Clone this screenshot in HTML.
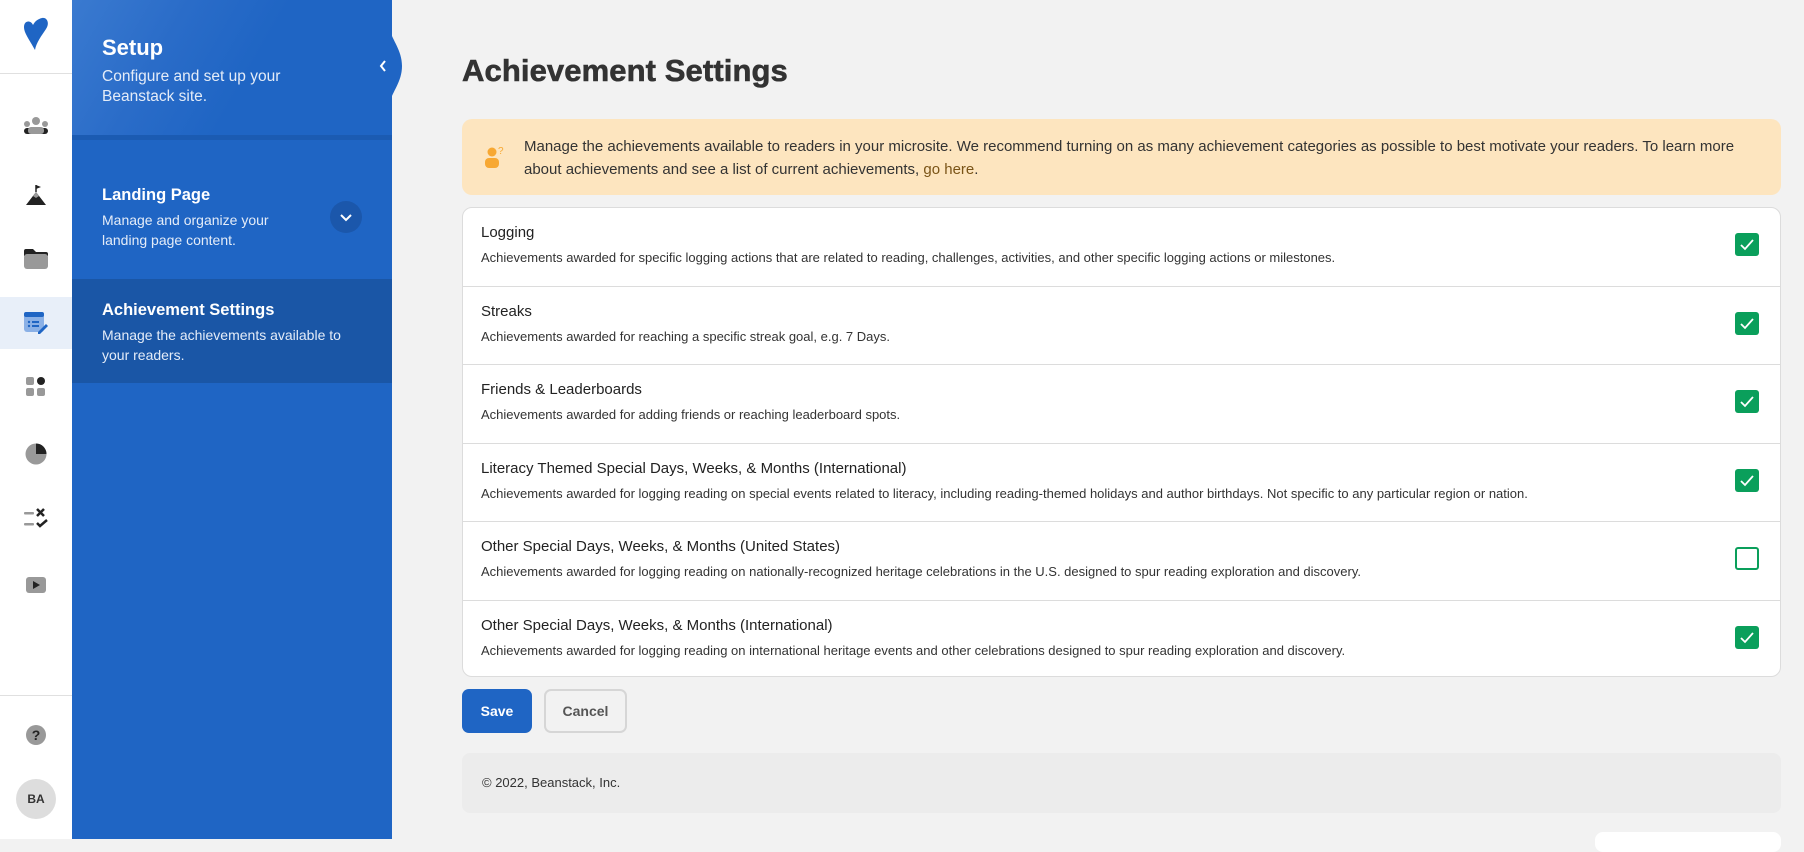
<!DOCTYPE html>
<html><head><style>
*{box-sizing:border-box;margin:0;padding:0}
body{width:1804px;height:839px;overflow:hidden;background:#f2f2f2;font-family:"Liberation Sans",sans-serif;position:relative;color:#333}
.rail{position:absolute;left:0;top:0;width:72px;height:839px;background:#fff}
.ic{position:absolute;left:0;width:72px;display:flex;justify-content:center}
.panel{position:absolute;left:72px;top:0;width:320px;height:839px;background:#1f65c4;color:#fff;overflow:hidden}
.hdr{height:140px;background:linear-gradient(120deg,#3a7ad0 0%,#2a6cc8 30%,#1f65c4 55%);padding:35px 30px;border-bottom:5px solid #1b5bb2}
.hdr h1{font-size:22px;font-weight:bold;margin-bottom:6px}
.hdr p{font-size:15.5px;line-height:20px;color:#e4ecf8}
.sec{position:absolute;left:0;width:320px;padding:0 30px}
.sec h2{font-size:16.5px;font-weight:bold;margin-bottom:5px}
.sec p{font-size:14px;line-height:20px;color:#e4ecf8}
.main{position:absolute;left:462px;top:0;width:1320px}
h3{position:absolute;top:53px;left:0;font-size:31px;font-weight:bold;color:#333;letter-spacing:0.1px;-webkit-text-stroke:0.6px #333}
.banner{position:absolute;top:119px;left:0;width:1319px;height:76px;background:#fde5bf;border-radius:10px;padding:16px 20px 0 62px;font-size:15px;line-height:23px;color:#333}
.card{position:absolute;top:207px;left:0;width:1319px;height:470px;background:#fff;border:1px solid #dcdcdc;border-radius:10px}
.row{height:78.5px;border-bottom:1px solid #dcdcdc;padding:16px 18px 0 18px;position:relative}
.row:last-child{border-bottom:none}
.row b{display:block;font-weight:normal;font-size:15px;color:#222;margin-bottom:8px}
.row span{font-size:13px;color:#333}
.cb{position:absolute;right:21px;top:25px;width:24px;height:23px;border-radius:3px;background:#0a9f5b}
.cb.off{background:#fff;border:2px solid #0a9f5b}
.btn{position:absolute;top:689px;height:44px;border-radius:7px;font-size:14px;font-weight:bold;display:flex;align-items:center;justify-content:center}
.foot{position:absolute;top:753px;left:0;width:1319px;height:60px;background:#ececec;border-radius:8px;padding:22px 20px;font-size:13px;color:#333}
</style></head><body>
<div class="rail">
 <div class="ic" style="top:17px"><svg width="26" height="34" viewBox="0 0 26 34"><path d="M10 8C8 3 1 3 1 10C1 16 6 22 12 33C13 26 19 18 23 12C27 6 24 0 19 1C15 2 12 4 10 8Z" fill="#1f65c4"/></svg></div>
 <div style="position:absolute;top:73px;left:0;width:72px;height:1px;background:#e0e0e0"></div>
 <div class="ic" style="top:117px"><svg width="24" height="22" viewBox="0 0 24 22"><circle cx="3" cy="7" r="3" fill="#999"/><circle cx="12" cy="4" r="4" fill="#999"/><circle cx="21" cy="7" r="3" fill="#999"/><rect x="0" y="11" width="24" height="6" rx="3" fill="#222"/><rect x="4" y="10" width="16" height="7" rx="3" fill="#999"/></svg></div>
 <div class="ic" style="top:184px"><svg width="22" height="22" viewBox="0 0 22 22"><path d="M11 1V8" stroke="#222" stroke-width="1.5"/><path d="M11 1L16 3L11 5Z" fill="#222"/><path d="M11 8L21 21H1Z" fill="#222"/><path d="M8 12L11 14L14 12L11 8Z" fill="#999"/></svg></div>
 <div class="ic" style="top:249px"><svg width="24" height="20" viewBox="0 0 24 20"><path d="M0 2a2 2 0 012-2h7l3 3h10a2 2 0 012 2v2H0Z" fill="#222"/><rect x="0" y="5" width="24" height="15" rx="3" fill="#999"/></svg></div>
 <div style="position:absolute;top:297px;left:0;width:72px;height:52px;background:#e8eff9"></div>
 <div style="position:absolute;top:299px;left:72px;width:5px;height:64px;background:#a9bfe0"></div>
 <div class="ic" style="top:312px"><svg width="24" height="22" viewBox="0 0 24 22"><rect x="0" y="0" width="20" height="20" rx="3" fill="#8ab0e6"/><rect x="0" y="0" width="20" height="5" rx="2" fill="#1f65c4"/><g fill="#1f65c4"><circle cx="5" cy="10" r="1.2"/><circle cx="5" cy="14" r="1.2"/><rect x="8" y="9" width="7" height="2"/><rect x="8" y="13" width="7" height="2"/></g><path d="M14 20L22 12L24 14L16 22H14Z" fill="#1f65c4"/></svg></div>
 <div class="ic" style="top:377px"><svg width="20" height="20" viewBox="0 0 20 20"><rect x="0" y="0" width="8" height="8" rx="2" fill="#999"/><circle cx="15" cy="4" r="4" fill="#222"/><rect x="0" y="11" width="8" height="8" rx="2" fill="#999"/><rect x="11" y="11" width="8" height="8" rx="2" fill="#999"/></svg></div>
 <div class="ic" style="top:443px"><svg width="22" height="22" viewBox="0 0 22 22"><circle cx="11" cy="11" r="10.5" fill="#999"/><path d="M11 0.5A10.5 10.5 0 0121.5 11H11Z" fill="#222"/></svg></div>
 <div class="ic" style="top:508px"><svg width="24" height="22" viewBox="0 0 24 22"><rect x="0" y="4" width="10" height="2.5" rx="1" fill="#999"/><rect x="0" y="15" width="10" height="2.5" rx="1" fill="#999"/><path d="M13 1L20 8M20 1L13 8" stroke="#222" stroke-width="2.5"/><path d="M13 15L16 18L23 12" stroke="#222" stroke-width="2.5" fill="none"/></svg></div>
 <div class="ic" style="top:577px"><svg width="20" height="16" viewBox="0 0 20 16"><rect width="20" height="16" rx="3" fill="#999"/><path d="M7 4L14 8L7 12Z" fill="#222"/></svg></div>
 <div style="position:absolute;top:695px;left:0;width:72px;height:1px;background:#e0e0e0"></div>
 <div class="ic" style="top:725px"><div style="width:20px;height:20px;border-radius:50%;background:#999;color:#222;font-weight:bold;font-size:14px;text-align:center;line-height:20px">?</div></div>
 <div class="ic" style="top:779px"><div style="width:40px;height:40px;border-radius:50%;background:#ddd;color:#333;font-weight:bold;font-size:12px;text-align:center;line-height:40px">BA</div></div>
</div>
<div class="panel">
 <div class="hdr"><h1>Setup</h1><p>Configure and set up your<br>Beanstack site.</p></div>
 <div class="sec" style="top:186px"><h2>Landing Page</h2><p>Manage and organize your<br>landing page content.</p>
  <div style="position:absolute;left:258px;top:15px;width:32px;height:32px;border-radius:50%;background:#1b57ab"><svg width="32" height="32" viewBox="0 0 32 32"><path d="M11 14L16 19L21 14" stroke="#fff" stroke-width="2" fill="none"/></svg></div></div>
 <div class="sec" style="top:279px;height:104px;background:#1a56a6;padding-top:22px"><h2>Achievement Settings</h2><p>Manage the achievements available to<br>your readers.</p></div>
</div>
<svg style="position:absolute;left:390px;top:30px" width="14" height="72" viewBox="0 0 14 72"><path d="M0 0C2 10 12 20 12 36C12 52 2 62 0 72Z" fill="#1f65c4"/></svg>
<svg style="position:absolute;left:377px;top:59px" width="12" height="14" viewBox="0 0 12 14"><path d="M8 2L4 7L8 12" stroke="#fff" stroke-width="2" fill="none"/></svg>
<div class="main">
 <h3>Achievement Settings</h3>
 <div class="banner"><svg style="position:absolute;left:23px;top:27px" width="22" height="22" viewBox="0 0 22 22"><circle cx="7" cy="6" r="4.5" fill="#f7a833"/><path d="M0 16a4 4 0 014-4h6a4 4 0 014 4v2a4 4 0 01-4 4H4a4 4 0 01-4-4Z" fill="#f7a833"/><text x="13" y="8" font-size="10" fill="#f7a833" font-family="Liberation Sans">?</text></svg>Manage the achievements available to readers in your microsite. We recommend turning on as many achievement categories as possible to best motivate your readers. To learn more about achievements and see a list of current achievements, <span style="color:#7a5417">go here</span>.</div>
 <div class="card">
  <div class="row"><b>Logging</b><span>Achievements awarded for specific logging actions that are related to reading, challenges, activities, and other specific logging actions or milestones.</span><div class="cb"><svg width="24" height="23"><path d="M6 12L10 16L18 7" stroke="#fff" stroke-width="1.8" fill="none"/></svg></div></div>
  <div class="row"><b>Streaks</b><span>Achievements awarded for reaching a specific streak goal, e.g. 7 Days.</span><div class="cb"><svg width="24" height="23"><path d="M6 12L10 16L18 7" stroke="#fff" stroke-width="1.8" fill="none"/></svg></div></div>
  <div class="row"><b>Friends &amp; Leaderboards</b><span>Achievements awarded for adding friends or reaching leaderboard spots.</span><div class="cb"><svg width="24" height="23"><path d="M6 12L10 16L18 7" stroke="#fff" stroke-width="1.8" fill="none"/></svg></div></div>
  <div class="row"><b>Literacy Themed Special Days, Weeks, &amp; Months (International)</b><span>Achievements awarded for logging reading on special events related to literacy, including reading-themed holidays and author birthdays. Not specific to any particular region or nation.</span><div class="cb"><svg width="24" height="23"><path d="M6 12L10 16L18 7" stroke="#fff" stroke-width="1.8" fill="none"/></svg></div></div>
  <div class="row"><b>Other Special Days, Weeks, &amp; Months (United States)</b><span>Achievements awarded for logging reading on nationally-recognized heritage celebrations in the U.S. designed to spur reading exploration and discovery.</span><div class="cb off"></div></div>
  <div class="row"><b>Other Special Days, Weeks, &amp; Months (International)</b><span>Achievements awarded for logging reading on international heritage events and other celebrations designed to spur reading exploration and discovery.</span><div class="cb"><svg width="24" height="23"><path d="M6 12L10 16L18 7" stroke="#fff" stroke-width="1.8" fill="none"/></svg></div></div>
 </div>
 <div class="btn" style="left:0;width:70px;background:#1f65c4;color:#fff">Save</div>
 <div class="btn" style="left:82px;width:83px;background:#f2f2f2;border:2px solid #d6d6d6;color:#555">Cancel</div>
 <div class="foot">© 2022, Beanstack, Inc.</div>
 <div style="position:absolute;left:1133px;top:832px;width:186px;height:20px;background:#fff;border-radius:8px"></div>
</div>
</body></html>
